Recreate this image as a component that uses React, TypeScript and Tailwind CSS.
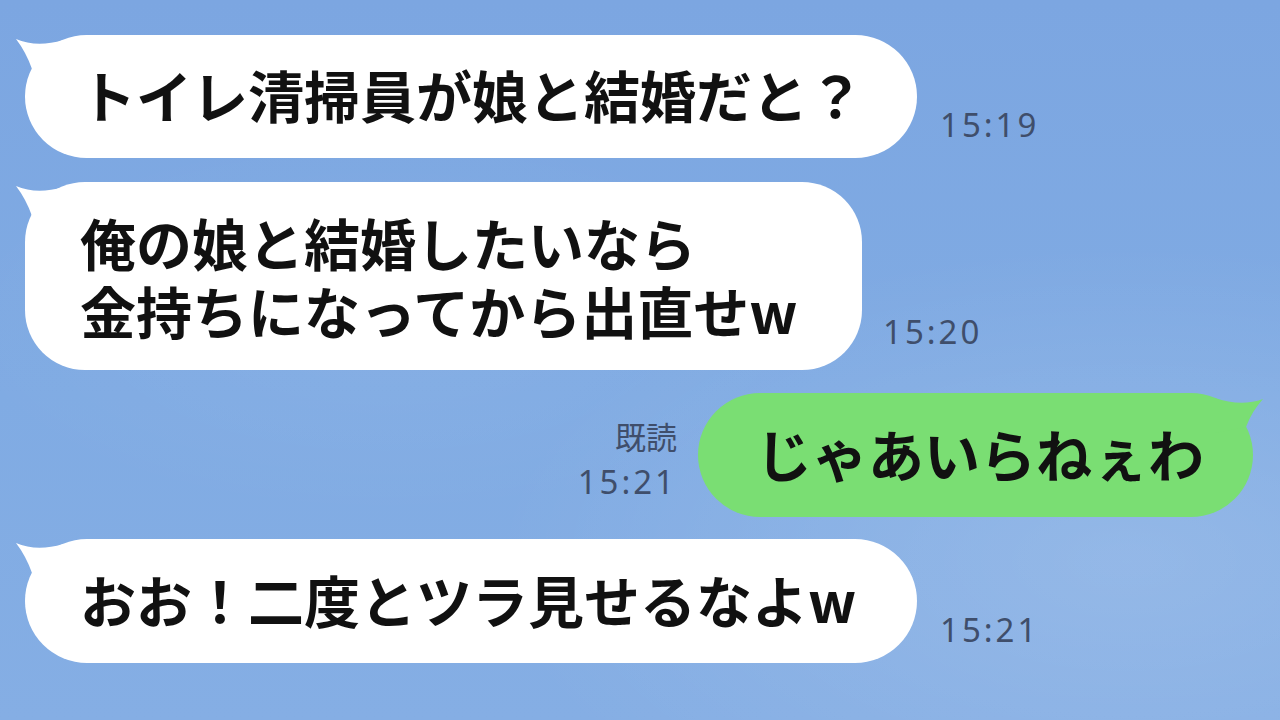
import React from 'react';

const jp = { fontFamily: '"Noto Sans CJK JP", "Noto Sans", sans-serif' };
const num = { fontFamily: '"Noto Sans", "Noto Sans CJK JP", sans-serif' };

function TailLeft({ fill }: { fill: string }) {
    return (
        <svg className="absolute left-[-12px] top-[-2px]" width="60" height="50" viewBox="-12 -2 60 50">
            <path d="M -9 4 Q 12 13 38 5 L 38 40 L 7 34 Q 1 17 -9 4 Z" fill={fill} />
        </svg>
    );
}

function TailRight({ fill }: { fill: string }) {
    return (
        <svg className="absolute right-[-12px] top-[-2px]" width="60" height="50" viewBox="-48 -2 60 50">
            <path d="M 10 6 Q -12 14 -38 5 L -38 40 L -7 34 Q -1 18 10 6 Z" fill={fill} />
        </svg>
    );
}

function Time({ children, className = '' }: { children: React.ReactNode; className?: string }) {
    return (
        <div style={num} className={`text-[33px] leading-none tracking-[3px] text-[#3f4e6b] ${className}`}>
            {children}
        </div>
    );
}

export default function App() {
    return (
        <div className="w-[1280px] h-[720px] overflow-hidden bg-[radial-gradient(ellipse_at_88%_78%,rgba(255,255,255,0.14),transparent_40%),radial-gradient(ellipse_at_30%_45%,rgba(255,255,255,0.05),transparent_35%),linear-gradient(180deg,#7ca6e1_0%,#80abe3_55%,#85aee4_100%)]">
            <div className="flex flex-col pl-[25px] pr-[27px]">
                {/* 15:19 */}
                <div className="mt-[35px] flex items-end gap-[23px]">
                    <div style={jp} className="relative w-[892px] h-[123px] rounded-full bg-white flex items-center pl-[55px] pb-[6px]">
                        <TailLeft fill="#ffffff" />
                        <span className="relative text-[56px] leading-[65px] font-bold text-[#111] whitespace-nowrap">トイレ清掃員が娘と結婚だと？</span>
                    </div>
                    <Time className="mb-[17px]">15:19</Time>
                </div>

                {/* 15:20 */}
                <div className="mt-[24px] flex items-end gap-[21px]">
                    <div style={jp} className="relative w-[837px] h-[188px] rounded-[60px] bg-white flex flex-col justify-center pl-[55px]">
                        <TailLeft fill="#ffffff" />
                        <div className="relative text-[56px] leading-[68px] font-bold text-[#111] whitespace-nowrap">俺の娘と結婚したいなら</div>
                        <div className="relative text-[56px] leading-[68px] font-bold text-[#111] whitespace-nowrap">金持ちになってから出直せw</div>
                    </div>
                    <Time className="mb-[22px]">15:20</Time>
                </div>

                {/* 15:21 sent */}
                <div className="mt-[23px] flex items-end justify-end gap-[21px]">
                    <div className="flex flex-col items-end gap-[14px] mb-[19px]">
                        <div style={jp} className="text-[31px] leading-none text-[#3f4e6b]">既読</div>
                        <Time>15:21</Time>
                    </div>
                    <div style={jp} className="relative w-[555px] h-[124px] rounded-full bg-[#7ade73] flex items-center pl-[58px] pb-[6px]">
                        <TailRight fill="#7ade73" />
                        <span className="relative text-[56px] leading-[65px] font-bold text-[#111] whitespace-nowrap">じゃあいらねぇわ</span>
                    </div>
                </div>

                {/* 15:21 */}
                <div className="mt-[22px] flex items-end gap-[23px]">
                    <div style={jp} className="relative w-[892px] h-[124px] rounded-full bg-white flex items-center pl-[55px] pb-[6px]">
                        <TailLeft fill="#ffffff" />
                        <span className="relative text-[56px] leading-[65px] font-bold text-[#111] whitespace-nowrap">おお！二度とツラ見せるなよw</span>
                    </div>
                    <Time className="mb-[17px]">15:21</Time>
                </div>
            </div>
        </div>
    );
}
